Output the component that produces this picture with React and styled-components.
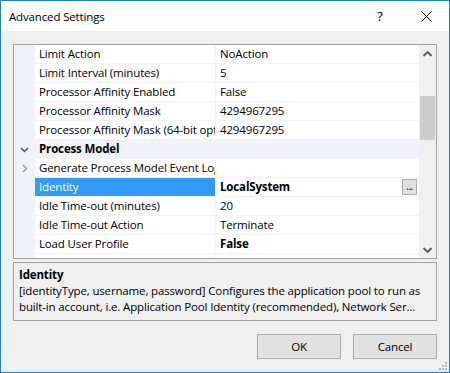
import React from "react";
import styled, { createGlobalStyle } from "styled-components";

const Global = createGlobalStyle`
  html, body { margin: 0; padding: 0; background: #ffffff; }
  body {
    font-family: "Open Sans", "Noto Sans", sans-serif;
    font-size: 11.5px;
    letter-spacing: -0.15px;
    color: #000;
  }
  * { box-sizing: border-box; }
`;

const Window = styled.div`
  width: 450px;
  height: 373px;
  border: 1px solid #1883d7;
  background: #f0f0f0;
  display: flex;
  flex-direction: column;
  position: relative;
`;

const TitleBar = styled.div`
  height: 30px;
  background: #ffffff;
  display: flex;
  align-items: center;
  padding-left: 8px;
`;

const Title = styled.div`
  flex: 1;
  color: #000;
`;

const TitleButton = styled.div`
  width: ${(p) => p.$w}px;
  height: 30px;
  display: flex;
  align-items: center;
  justify-content: center;
  color: #000;
  font-size: 13px;
`;

const Body = styled.div`
  padding: 13px 12px 0 12px;
  display: flex;
  flex-direction: column;
`;

const Grid = styled.div`
  height: 215px;
  border: 1px solid #a0a0a0;
  display: flex;
  background: #f0f3f9;
`;

const Rows = styled.div`
  flex: 1;
  overflow: hidden;
  display: flex;
  flex-direction: column;
`;

const Row = styled.div`
  height: 19px;
  flex: none;
  display: grid;
  grid-template-columns: 21px 181px 1fr;
`;

const Gutter = styled.div`
  background: #f0f3f9;
  display: flex;
  align-items: center;
  justify-content: center;
  color: #808080;
`;

const NameCell = styled.div`
  background: ${(p) => (p.$selected ? "#3399ff" : "#ffffff")};
  color: ${(p) => (p.$selected ? "#ffffff" : "#000000")};
  border-bottom: 1px solid #f0f3f9;
  border-right: 1px solid #f0f3f9;
  padding-left: 4px;
  line-height: 18px;
  white-space: nowrap;
  overflow: hidden;
`;

const ValueCell = styled.div`
  background: #ffffff;
  border-bottom: 1px solid #f0f3f9;
  padding-left: 4px;
  padding-right: 2px;
  line-height: 18px;
  white-space: nowrap;
  overflow: hidden;
  font-weight: ${(p) => (p.$bold ? 700 : 400)};
  display: flex;
  align-items: center;
`;

const ValueText = styled.span`
  flex: 1;
`;

const DotsButton = styled.div`
  width: 15px;
  height: 16px;
  border: 1px solid #adadad;
  background: #e1e1e1;
  font-weight: 400;
  font-size: 10px;
  line-height: 12px;
  text-align: center;
  letter-spacing: -0.5px;
`;

const CategoryRow = styled.div`
  height: 19px;
  flex: none;
  display: grid;
  grid-template-columns: 21px 1fr;
  background: #f0f3f9;
`;

const CategoryLabel = styled.div`
  font-weight: 700;
  padding-left: 4px;
  line-height: 18px;
`;

const ScrollBar = styled.div`
  width: 17px;
  background: #f0f0f0;
  display: flex;
  flex-direction: column;
`;

const ScrollArrow = styled.div`
  height: 17px;
  display: flex;
  align-items: center;
  justify-content: center;
`;

const ScrollTrack = styled.div`
  flex: 1;
  padding-top: 34px;
`;

const Thumb = styled.div`
  height: 44px;
  margin: 0 1px;
  background: #cdcdcd;
`;

const Description = styled.div`
  margin-top: 3px;
  height: 59px;
  border: 1px solid #a0a0a0;
  padding: 4px 5px 0 5px;
  line-height: 16px;
`;

const DescTitle = styled.div`
  font-weight: 700;
`;

const DescText = styled.div`
  white-space: nowrap;
  overflow: hidden;
`;

const ButtonRow = styled.div`
  margin-top: 13px;
  display: flex;
  justify-content: flex-end;
  gap: 12px;
`;

const Button = styled.div`
  width: ${(p) => p.$w}px;
  height: 25px;
  border: 1px solid #adadad;
  background: #e1e1e1;
  display: flex;
  align-items: center;
  justify-content: center;
`;

const Grip = styled.svg`
  position: absolute;
  right: 1px;
  bottom: 1px;
`;

const ChevronRight = () => (
  <svg width="6" height="9" viewBox="0 0 6 9">
    <path d="M1 1 L4.5 4.5 L1 8" fill="none" stroke="#a0a0a0" strokeWidth="1.5" />
  </svg>
);
const ChevronDown = () => (
  <svg width="9" height="6" viewBox="0 0 9 6">
    <path d="M1 1 L4.5 4.5 L8 1" fill="none" stroke="#505050" strokeWidth="1.5" />
  </svg>
);
const ArrowUp = () => (
  <svg width="9" height="6" viewBox="0 0 9 6">
    <path d="M0.5 5 L4.5 1 L8.5 5" fill="none" stroke="#606060" strokeWidth="2" />
  </svg>
);
const ArrowDown = () => (
  <svg width="9" height="6" viewBox="0 0 9 6">
    <path d="M0.5 1 L4.5 5 L8.5 1" fill="none" stroke="#606060" strokeWidth="2" />
  </svg>
);

const top = [
  ["Limit Action", "NoAction"],
  ["Limit Interval (minutes)", "5"],
  ["Processor Affinity Enabled", "False"],
  ["Processor Affinity Mask", "4294967295"],
  ["Processor Affinity Mask (64-bit option)", "4294967295"],
];

const bottom = [
  { name: "Generate Process Model Event Log Entry", value: "", expand: true },
  { name: "Identity", value: "LocalSystem", bold: true, selected: true, dots: true },
  { name: "Idle Time-out (minutes)", value: "20" },
  { name: "Idle Time-out Action", value: "Terminate" },
  { name: "Load User Profile", value: "False", bold: true },
  { name: "", value: "" },
];

export default function App() {
  return (
    <>
      <Global />
      <Window>
        <TitleBar>
          <Title>Advanced Settings</Title>
          <TitleButton $w={46}>?</TitleButton>
          <TitleButton $w={46}>
            <svg width="11" height="11" viewBox="0 0 11 11">
              <path d="M0.5 0.5 L10.5 10.5 M10.5 0.5 L0.5 10.5" stroke="#000" strokeWidth="1" />
            </svg>
          </TitleButton>
        </TitleBar>
        <Body>
          <Grid>
            <Rows>
              {top.map(([n, v]) => (
                <Row key={n}>
                  <Gutter />
                  <NameCell>{n}</NameCell>
                  <ValueCell>
                    <ValueText>{v}</ValueText>
                  </ValueCell>
                </Row>
              ))}
              <CategoryRow>
                <Gutter>
                  <ChevronDown />
                </Gutter>
                <CategoryLabel>Process Model</CategoryLabel>
              </CategoryRow>
              {bottom.map((r, i) => (
                <Row key={i}>
                  <Gutter>{r.expand && <ChevronRight />}</Gutter>
                  <NameCell $selected={r.selected}>{r.name}</NameCell>
                  <ValueCell $bold={r.bold}>
                    <ValueText>{r.value}</ValueText>
                    {r.dots && <DotsButton>...</DotsButton>}
                  </ValueCell>
                </Row>
              ))}
            </Rows>
            <ScrollBar>
              <ScrollArrow>
                <ArrowUp />
              </ScrollArrow>
              <ScrollTrack>
                <Thumb />
              </ScrollTrack>
              <ScrollArrow>
                <ArrowDown />
              </ScrollArrow>
            </ScrollBar>
          </Grid>
          <Description>
            <DescTitle>Identity</DescTitle>
            <DescText>
              [identityType, username, password] Configures the application pool to run as
            </DescText>
            <DescText>
              built-in account, i.e. Application Pool Identity (recommended), Network Ser...
            </DescText>
          </Description>
          <ButtonRow>
            <Button $w={84}>OK</Button>
            <Button $w={84}>Cancel</Button>
          </ButtonRow>
        </Body>
        <Grip width="10" height="10" viewBox="0 0 10 10">
          {[
            [8, 2],
            [8, 5],
            [5, 5],
            [8, 8],
            [5, 8],
            [2, 8],
          ].map(([x, y], i) => (
            <rect key={i} x={x - 1} y={y - 1} width="2" height="2" fill="#b8b8b8" />
          ))}
        </Grip>
      </Window>
    </>
  );
}
